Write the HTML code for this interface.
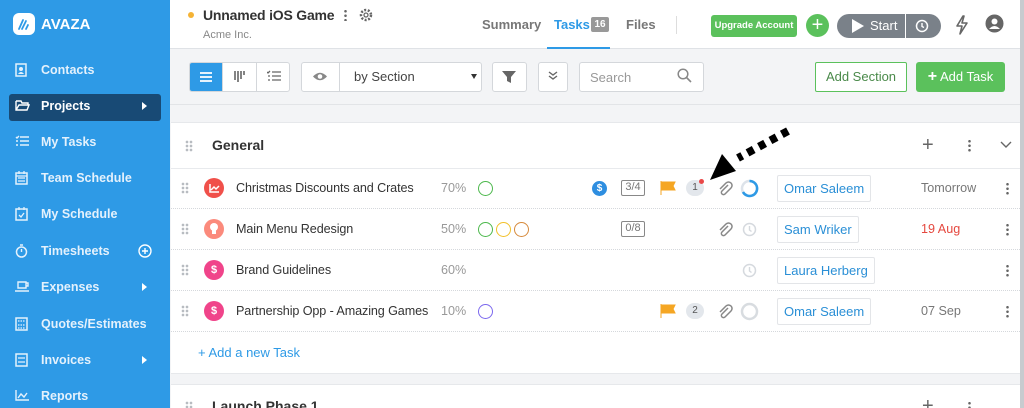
<!DOCTYPE html>
<html><head><style>
*{box-sizing:border-box;margin:0;padding:0}
html,body{width:1024px;height:408px;overflow:hidden}
body{position:relative;font-family:"Liberation Sans",sans-serif;background:#f3f4f6}
.a{position:absolute}
#sb{left:0;top:0;width:170px;height:408px;background:#2e9ae6}
.nav{position:absolute;left:0;width:170px;height:28px;color:#e4f1fc;font-weight:bold;font-size:12.5px;line-height:28px;padding-left:41px}
.nav svg{position:absolute;left:15px;top:7px}
.nav .car{position:absolute;left:142px;top:10px;width:0;height:0;border-left:5px solid #fff;border-top:4px solid transparent;border-bottom:4px solid transparent}
.btn{position:absolute;border:1px solid #d4d7db;background:#fff;border-radius:3px}
.row{position:absolute;left:171px;width:849px;height:41px;border-bottom:1px dotted #d5d8dc;font-size:12.6px;color:#333}
.drag{position:absolute;left:10px;top:14px;width:8px;height:12px;background-image:radial-gradient(circle,#b8bcc1 1.2px,transparent 1.5px);background-size:4px 4px}
.ic{position:absolute;left:33px;top:10px;width:20px;height:20px;border-radius:50%;color:#fff;font-size:11px;font-weight:bold;text-align:center;line-height:20px}
.name{position:absolute;left:65px;top:13px;letter-spacing:-0.1px}
.pct{position:absolute;left:270px;top:13px;color:#999}
.ring{position:absolute;top:13px;width:15px;height:15px;border-radius:50%;border:1.8px solid}
.user{position:absolute;left:606px;top:7px;height:27px;border:1px solid #e3e5e8;border-radius:2px;color:#2a8fd6;padding:0 6px;line-height:25px;font-size:13px}
.date{position:absolute;left:750px;top:13px;color:#777}
.dots{position:absolute;left:835px;top:14px;width:3px;height:13px;background-image:radial-gradient(circle,#666 1.2px,transparent 1.4px);background-size:3px 4.5px}
.chk{position:absolute;left:450px;top:12px;width:24px;height:16px;border:1.4px solid #888;border-radius:2px;font-size:11px;color:#777;text-align:center;line-height:13px}
.flag{position:absolute;top:13px}
.cm{position:absolute;top:12px;width:18px;height:16px;border-radius:8px;background:#e3e7ec;font-size:10px;color:#555;text-align:center;line-height:16px}
</style></head><body>
<div id="sb" class="a">
 <div class="a" style="left:13px;top:13px;width:22px;height:22px;background:#fff;border-radius:6px"><svg width="22" height="22"><path d="M6 16 L10 7 M9 16 L13 8 M13 16 L15 12" stroke="#2e9ae6" stroke-width="1.8" fill="none" stroke-linecap="round"/></svg></div>
 <div class="a" style="left:41px;top:16px;color:#fff;font-weight:bold;font-size:15px">AVAZA</div>
 <div class="nav" style="top:56px"><svg width="13" height="14"><rect x="1" y="1" width="10" height="12" fill="none" stroke="#e4f1fc" stroke-width="1.5"/><circle cx="6" cy="6" r="2" fill="#e4f1fc"/><path d="M3 11 Q6 7 9 11" fill="#e4f1fc"/></svg>Contacts</div>
 <div class="a" style="left:9px;top:94px;width:152px;height:27px;background:#184a75;border-radius:3px"></div>
 <div class="nav" style="top:92px;color:#fff"><svg width="15" height="13"><path d="M1 2h5l1 2h6v2M1 2v9h11l2-5H4l-3 5" fill="none" stroke="#fff" stroke-width="1.4"/></svg>Projects<span class="car"></span></div>
 <div class="nav" style="top:128px"><svg width="14" height="13"><path d="M5 2h9M5 6h9M5 10h9M1 2l1 1 2-2M1 6h2M1 10h2" stroke="#e4f1fc" stroke-width="1.4" fill="none"/></svg>My Tasks</div>
 <div class="nav" style="top:164px"><svg width="13" height="14"><rect x="1" y="2" width="11" height="11" fill="none" stroke="#e4f1fc" stroke-width="1.5"/><path d="M1 5h11M4 0v3M9 0v3M3 7h7M3 10h7" stroke="#e4f1fc" stroke-width="1.3"/></svg>Team Schedule</div>
 <div class="nav" style="top:200px"><svg width="13" height="14"><rect x="1" y="2" width="11" height="11" fill="none" stroke="#e4f1fc" stroke-width="1.5"/><path d="M4 0v3M9 0v3M4 8l2 2 3-4" stroke="#e4f1fc" stroke-width="1.3" fill="none"/></svg>My Schedule</div>
 <div class="nav" style="top:237px"><svg width="13" height="14"><circle cx="6.5" cy="8" r="5" fill="none" stroke="#e4f1fc" stroke-width="1.5"/><path d="M5 1h3M6.5 8V5" stroke="#e4f1fc" stroke-width="1.4"/></svg>Timesheets<svg style="left:138px;top:7px" width="14" height="14"><circle cx="7" cy="7" r="6" fill="none" stroke="#fff" stroke-width="1.4"/><path d="M7 4v6M4 7h6" stroke="#fff" stroke-width="1.4"/></svg></div>
 <div class="nav" style="top:273px"><svg width="15" height="13"><path d="M3 2h8v6H3zM11 3h2v3h-2M0 11h14" fill="none" stroke="#e4f1fc" stroke-width="1.4"/></svg>Expenses<span class="car"></span></div>
 <div class="nav" style="top:310px"><svg width="13" height="14"><rect x="1" y="1" width="11" height="12" fill="none" stroke="#e4f1fc" stroke-width="1.5"/><path d="M3 4h7M3 8h7M3 11h7" stroke="#e4f1fc" stroke-width="1.2" stroke-dasharray="1.5 1"/></svg>Quotes/Estimates</div>
 <div class="nav" style="top:346px"><svg width="13" height="14"><rect x="1" y="1" width="11" height="12" fill="none" stroke="#e4f1fc" stroke-width="1.5"/><path d="M3 5h7M3 9h7" stroke="#e4f1fc" stroke-width="1.3"/></svg>Invoices<span class="car"></span></div>
 <div class="nav" style="top:382px"><svg width="15" height="13"><path d="M1 1v10h13M3 9l3-4 3 3 3-4" fill="none" stroke="#e4f1fc" stroke-width="1.4"/></svg>Reports</div>
</div>
<!-- header -->
<div class="a" style="left:170px;top:0;width:850px;height:49px;background:#fff;border-bottom:1px solid #dfe2e6"></div>
<div class="a" style="left:188px;top:12px;width:6px;height:6px;border-radius:50%;background:#f5b335"></div>
<div class="a" style="left:203px;top:7px;font-size:14px;font-weight:bold;color:#333;letter-spacing:-0.2px">Unnamed iOS Game</div>
<div class="a" style="left:344px;top:9px;width:3px;height:12px;background-image:radial-gradient(circle,#666 1.2px,transparent 1.4px);background-size:3px 4.5px"></div>
<svg class="a" style="left:358px;top:7px" width="16" height="16"><circle cx="8" cy="8" r="5" fill="none" stroke="#666" stroke-width="2.5" stroke-dasharray="2 1.6"/><circle cx="8" cy="8" r="2" fill="none" stroke="#666" stroke-width="1.3"/></svg>
<div class="a" style="left:203px;top:29px;font-size:11px;color:#888">Acme Inc.</div>
<div class="a" style="left:482px;top:17px;font-size:13px;font-weight:bold;color:#777">Summary</div>
<div class="a" style="left:554px;top:17px;font-size:13px;font-weight:bold;color:#2e9ae6">Tasks</div>
<div class="a" style="left:591px;top:17px;width:18px;height:15px;background:#999;color:#fff;border-radius:2px;font-size:10px;font-weight:bold;text-align:center;line-height:15px">16</div>
<div class="a" style="left:547px;top:47px;width:63px;height:2px;background:#2e9ae6"></div>
<div class="a" style="left:626px;top:17px;font-size:13px;font-weight:bold;color:#777">Files</div>
<div class="a" style="left:676px;top:16px;width:1px;height:18px;background:#ddd"></div>
<div class="a" style="left:711px;top:15px;width:86px;height:22px;background:#5bc15c;border-radius:3px;color:#fff;font-size:9.5px;font-weight:bold;text-align:center;line-height:22px">Upgrade Account</div>
<div class="a" style="left:806px;top:14px;width:23px;height:23px;border-radius:50%;background:#5bc15c;color:#fff;font-size:20px;text-align:center;line-height:22px">+</div>
<div class="a" style="left:837px;top:14px;width:104px;height:24px;border-radius:12px;background:#7a8189"></div>
<div class="a" style="left:905px;top:14px;width:1px;height:24px;background:#fff"></div>
<svg class="a" style="left:851px;top:19px" width="14" height="14"><path d="M1 0L13 7L1 14Z" fill="#fff"/></svg>
<div class="a" style="left:870px;top:18px;color:#fff;font-size:13px">Start</div>
<svg class="a" style="left:915px;top:19px" width="14" height="14"><circle cx="7" cy="7" r="5.5" fill="none" stroke="#fff" stroke-width="1.5"/><path d="M7 4v3.5l2 1" stroke="#fff" stroke-width="1.4" fill="none"/></svg>
<svg class="a" style="left:955px;top:15px" width="14" height="20"><path d="M8 1L2 11h5l-2 8 7-11H7l2-7z" fill="none" stroke="#666" stroke-width="1.6" stroke-linejoin="round"/></svg>
<svg class="a" style="left:985px;top:14px" width="19" height="19"><circle cx="9.5" cy="9.5" r="9" fill="#666"/><circle cx="9.5" cy="7.5" r="3" fill="#fff"/><path d="M4 15q5.5-6 11 0" fill="#fff"/></svg>
<!-- toolbar -->
<div class="a" style="left:170px;top:104px;width:850px;height:1px;background:#e2e4e7"></div>
<div class="btn" style="left:189px;top:62px;width:101px;height:30px"></div>
<div class="a" style="left:190px;top:63px;width:32px;height:28px;background:#2e9ae6;border-radius:2px 0 0 2px"></div>
<svg class="a" style="left:199px;top:71px" width="14" height="12"><path d="M1 2h12M1 6h12M1 10h12" stroke="#fff" stroke-width="1.8"/></svg>
<div class="a" style="left:222px;top:63px;width:1px;height:28px;background:#d4d7db"></div>
<div class="a" style="left:256px;top:63px;width:1px;height:28px;background:#d4d7db"></div>
<svg class="a" style="left:233px;top:70px" width="13" height="12"><path d="M2 1v9M5 1v11M8 1v8M11 1v4" stroke="#666" stroke-width="1.6"/></svg>
<svg class="a" style="left:267px;top:70px" width="14" height="12"><path d="M5 2h9M5 6h9M5 10h9M0 2l1 1 2-2M1 6h2M1 10h2" stroke="#666" stroke-width="1.3" fill="none"/></svg>
<div class="btn" style="left:301px;top:62px;width:181px;height:30px"></div>
<div class="a" style="left:339px;top:63px;width:1px;height:28px;background:#d4d7db"></div>
<svg class="a" style="left:312px;top:71px" width="16" height="11"><path d="M1 5.5Q8-2 15 5.5Q8 13 1 5.5z" fill="#888"/><circle cx="8" cy="5.5" r="2.3" fill="#fff"/></svg>
<div class="a" style="left:354px;top:69px;font-size:13px;color:#444">by Section</div>
<div class="a" style="left:471px;top:74px;border-top:5px solid #333;border-left:3px solid transparent;border-right:3px solid transparent"></div>
<div class="btn" style="left:492px;top:62px;width:35px;height:30px"></div>
<svg class="a" style="left:502px;top:70px" width="14" height="14"><path d="M0 1h14L9 7v6L5 11V7z" fill="#666"/></svg>
<div class="btn" style="left:538px;top:62px;width:30px;height:30px"></div>
<svg class="a" style="left:548px;top:71px" width="10" height="10"><path d="M1 1l4 3 4-3M1 5l4 3 4-3" stroke="#666" stroke-width="1.4" fill="none"/></svg>
<div class="btn" style="left:579px;top:62px;width:125px;height:30px"></div>
<div class="a" style="left:590px;top:70px;font-size:13px;color:#999">Search</div>
<svg class="a" style="left:677px;top:68px" width="15" height="15"><circle cx="6" cy="6" r="4.8" fill="none" stroke="#888" stroke-width="1.5"/><path d="M9.5 9.5L14 14" stroke="#888" stroke-width="1.6"/></svg>
<div class="a" style="left:815px;top:62px;width:92px;height:30px;border:1.5px solid #5bc15c;background:#fff;border-radius:2px;color:#4a8a4a;font-size:13px;text-align:center;line-height:27px">Add Section</div>
<div class="a" style="left:916px;top:62px;width:89px;height:30px;background:#5bc15c;border-radius:3px;color:#fff;font-size:13px;text-align:center;line-height:30px"><b style="font-size:16px">+</b> Add Task</div>
<!-- card -->
<div class="a" style="left:171px;top:122px;width:849px;height:252px;background:#fff;border-top:1px solid #e6e8eb;border-bottom:1px solid #e6e8eb"></div>
<div class="a" style="left:171px;top:168px;width:849px;height:1px;background:#e8eaed"></div>
<div class="a" style="left:185px;top:140px;width:8px;height:12px;background-image:radial-gradient(circle,#b8bcc1 1.2px,transparent 1.5px);background-size:4px 4px"></div>
<div class="a" style="left:212px;top:137px;font-size:14px;font-weight:bold;color:#333">General</div>
<div class="a" style="left:922px;top:134px;font-size:20px;color:#666">+</div>
<div class="a" style="left:968px;top:139px;width:3px;height:13px;background-image:radial-gradient(circle,#666 1.2px,transparent 1.4px);background-size:3px 4.5px"></div>
<svg class="a" style="left:1000px;top:141px" width="12" height="8"><path d="M1 1l5 5 5-5" stroke="#666" stroke-width="1.4" fill="none"/></svg>

<div class="row" style="top:168px"><div class="drag"></div><div class="ic" style="background:#f0504a"><svg width="20" height="20"><path d="M6 6v8h9M7 12l3-3 2 2 3-3" stroke="#fff" stroke-width="1.5" fill="none"/></svg></div><div class="name">Christmas Discounts and Crates</div><div class="pct">70%</div>
<div class="ring" style="left:307px;border-color:#4cb84c"></div>
<div class="a" style="left:421px;top:13px;width:15px;height:15px;border-radius:50%;background:#2e8ee0;color:#fff;font-size:10px;font-weight:bold;text-align:center;line-height:15px">$</div>
<div class="chk">3/4</div>
<svg class="flag" style="left:489px" width="16" height="14"><path d="M1 0v14M1 1h14l-2 4 2 4H1" fill="#f5a623" stroke="#f5a623"/></svg>
<div class="cm" style="left:515px">1</div><div class="a" style="left:528px;top:11px;width:5px;height:5px;border-radius:50%;background:#e94848"></div>
<svg class="a" style="left:546px;top:13px" width="16" height="16"><path d="M11 4L5 10a2 2 0 0 0 3 3l6-6a3.5 3.5 0 0 0-5-5L3 8" stroke="#888" stroke-width="1.5" fill="none"/></svg>
<svg class="a" style="left:569px;top:11px" width="19" height="19"><circle cx="9.5" cy="9.5" r="7.5" fill="none" stroke="#dde3ea" stroke-width="2.5"/><path d="M9.5 2A7.5 7.5 0 1 1 3 13" fill="none" stroke="#2e9ae6" stroke-width="2.5"/></svg>
<div class="user">Omar Saleem</div><div class="date">Tomorrow</div><div class="dots"></div></div>

<div class="row" style="top:209px"><div class="drag"></div><div class="ic" style="background:#fb8a7c"><svg width="20" height="20"><circle cx="10" cy="8" r="4" fill="#fff"/><rect x="8" y="11" width="4" height="4" fill="#fff"/></svg></div><div class="name">Main Menu Redesign</div><div class="pct">50%</div>
<div class="ring" style="left:307px;border-color:#4cb84c"></div><div class="ring" style="left:325px;border-color:#f2c02a"></div><div class="ring" style="left:343px;border-color:#d68a3c"></div>
<div class="chk">0/8</div>
<svg class="a" style="left:546px;top:13px" width="16" height="16"><path d="M11 4L5 10a2 2 0 0 0 3 3l6-6a3.5 3.5 0 0 0-5-5L3 8" stroke="#888" stroke-width="1.5" fill="none"/></svg>
<svg class="a" style="left:571px;top:13px" width="15" height="15"><circle cx="7.5" cy="7.5" r="6" fill="none" stroke="#d5d9de" stroke-width="1.5"/><path d="M7.5 4v4l2 1.5" stroke="#d5d9de" stroke-width="1.4" fill="none"/></svg>
<div class="user">Sam Wriker</div><div class="date" style="color:#e5483f">19 Aug</div><div class="dots"></div></div>

<div class="row" style="top:250px"><div class="drag"></div><div class="ic" style="background:#f0448a">$</div><div class="name">Brand Guidelines</div><div class="pct">60%</div>
<svg class="a" style="left:571px;top:13px" width="15" height="15"><circle cx="7.5" cy="7.5" r="6" fill="none" stroke="#d5d9de" stroke-width="1.5"/><path d="M7.5 4v4l2 1.5" stroke="#d5d9de" stroke-width="1.4" fill="none"/></svg>
<div class="user">Laura Herberg</div><div class="dots"></div></div>

<div class="row" style="top:291px"><div class="drag"></div><div class="ic" style="background:#f0448a">$</div><div class="name">Partnership Opp - Amazing Games</div><div class="pct">10%</div>
<div class="ring" style="left:307px;border-color:#7b68ee"></div>
<svg class="flag" style="left:489px" width="16" height="14"><path d="M1 0v14M1 1h14l-2 4 2 4H1" fill="#f5a623" stroke="#f5a623"/></svg>
<div class="cm" style="left:515px">2</div>
<svg class="a" style="left:546px;top:13px" width="16" height="16"><path d="M11 4L5 10a2 2 0 0 0 3 3l6-6a3.5 3.5 0 0 0-5-5L3 8" stroke="#888" stroke-width="1.5" fill="none"/></svg>
<svg class="a" style="left:569px;top:11px" width="19" height="19"><circle cx="9.5" cy="9.5" r="7.5" fill="none" stroke="#d8dce0" stroke-width="2.5"/></svg>
<div class="user">Omar Saleem</div><div class="date">07 Sep</div><div class="dots"></div></div>

<div class="a" style="left:198px;top:345px;font-size:13px;color:#2e9ae6">+ Add a new Task</div>
<!-- next card -->
<div class="a" style="left:171px;top:384px;width:849px;height:24px;background:#fff;border-top:1px solid #e6e8eb;overflow:hidden">
<div class="a" style="left:14px;top:16px;width:8px;height:12px;background-image:radial-gradient(circle,#b8bcc1 1.2px,transparent 1.5px);background-size:4px 4px"></div>
<div class="a" style="left:41px;top:13px;font-size:14px;font-weight:bold;color:#333">Launch Phase 1</div>
<div class="a" style="left:751px;top:10px;font-size:20px;color:#666">+</div>
<div class="a" style="left:797px;top:16px;width:3px;height:13px;background-image:radial-gradient(circle,#666 1.2px,transparent 1.4px);background-size:3px 4.5px"></div>
</div>
<div class="a" style="left:1020px;top:0;width:4px;height:408px;background:#c8cbcf"></div>
<!-- arrow -->
<svg class="a" style="left:700px;top:120px" width="110" height="65"><path d="M88 11L38 38" stroke="#000" stroke-width="8" stroke-dasharray="7 6"/><path d="M10 60L22 34L36 51Z" fill="#000"/></svg>
</body></html>
